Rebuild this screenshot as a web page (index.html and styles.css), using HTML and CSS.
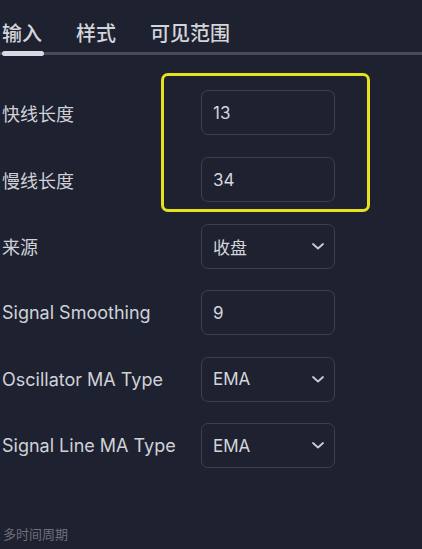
FILE: index.html
```html
<!DOCTYPE html>
<html lang="zh">
<head>
<meta charset="utf-8">
<link rel="stylesheet" href="styles.css">
</head>
<body>
<div class="panel">
  <div class="tabs">
    <div class="tab active">输入</div>
    <div class="tab">样式</div>
    <div class="tab">可见范围</div>
  </div>
  <div class="tabline"><div class="indicator"></div></div>
  <div class="form">
    <div class="hl">
      <div class="row"><div class="label">快线长度</div><div class="field">13</div></div>
      <div class="row"><div class="label">慢线长度</div><div class="field">34</div></div>
    </div>
    <div class="row"><div class="label">来源</div><div class="field select">收盘<svg class="chev" viewBox="0 0 12 7"><path d="M1 1l5 4.5L11 1" fill="none" stroke="#c9cbd2" stroke-width="1.8" stroke-linecap="round" stroke-linejoin="round"/></svg></div></div>
    <div class="row"><div class="label">Signal Smoothing</div><div class="field">9</div></div>
    <div class="row"><div class="label">Oscillator MA Type</div><div class="field select">EMA<svg class="chev" viewBox="0 0 12 7"><path d="M1 1l5 4.5L11 1" fill="none" stroke="#c9cbd2" stroke-width="1.8" stroke-linecap="round" stroke-linejoin="round"/></svg></div></div>
    <div class="row"><div class="label">Signal Line MA Type</div><div class="field select">EMA<svg class="chev" viewBox="0 0 12 7"><path d="M1 1l5 4.5L11 1" fill="none" stroke="#c9cbd2" stroke-width="1.8" stroke-linecap="round" stroke-linejoin="round"/></svg></div></div>
  </div>
  <div class="footer">多时间周期</div>
</div>
</body>
</html>
```
FILE: styles.css
```css
html, body {
  margin: 0;
  padding: 0;
  background: #1e2130;
}
body {
  width: 422px;
  height: 549px;
  overflow: hidden;
  font-family: Inter, "Noto Sans CJK SC", sans-serif;
  color: #d4d6dc;
}
.panel {
  position: relative;
  height: 549px;
}
.tabs {
  display: flex;
  gap: 34px;
  padding: 21px 0 0 2px;
  height: 31px;
}
.tab {
  font-size: 20px;
  line-height: 26px;
  color: #d3d5db;
  font-weight: 500;
}
.tabline {
  height: 3px;
  background: #474a57;
  position: relative;
}
.indicator {
  position: absolute;
  left: 2px;
  top: -1px;
  width: 42px;
  height: 5px;
  border-radius: 3px;
  background: #d9dbe2;
}
.form {
  display: flex;
  flex-direction: column;
  gap: 21.6px;
  padding-top: 35px;
}
.hl {
  display: flex;
  flex-direction: column;
  gap: 22px;
  position: relative;
}
.hl::after {
  content: "";
  position: absolute;
  left: 161px;
  top: -17px;
  width: 203px;
  height: 133px;
  border: 3px solid #e6e21e;
  border-radius: 7px;
}
.row {
  display: flex;
  align-items: center;
  height: 45px;
}
.label {
  width: 201px;
  padding-left: 2px;
  box-sizing: border-box;
  font-size: 18px;
  color: #d0d2d8;
}
.field {
  width: 134px;
  height: 45px;
  box-sizing: border-box;
  border: 1.5px solid #3c3f4c;
  border-radius: 7px;
  padding: 0 10px 0 11px;
  display: flex;
  align-items: center;
  justify-content: space-between;
  font-size: 17px;
  color: #d4d6dc;
}
.chev {
  width: 12px;
  height: 7px;
}
.footer {
  position: absolute;
  left: 3px;
  top: 524px;
  font-size: 13px;
  color: #6c6f7a;
}
```
